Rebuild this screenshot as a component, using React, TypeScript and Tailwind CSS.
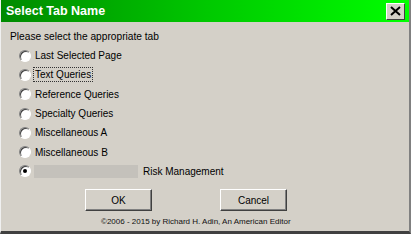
import { useState } from 'react';

const options = [
    'Last Selected Page',
    'Text Queries',
    'Reference Queries',
    'Specialty Queries',
    'Miscellaneous A',
    'Miscellaneous B',
];

function Radio({ checked }: { checked: boolean }) {
    return (
        <span className="relative w-[12px] h-[12px] rounded-full bg-white shrink-0 border border-t-[#808080] border-l-[#808080] border-b-[#ffffff] border-r-[#ffffff] shadow-[inset_1px_1px_0_#404040]">
            {checked && <span className="absolute left-[3px] top-[3px] w-[4px] h-[4px] rounded-full bg-black" />}
        </span>
    );
}

export default function App() {
    const [selected] = useState(6);

    return (
        <div
            className="w-[411px] h-[234px] bg-[#d4d0c8] flex flex-col border-l border-l-[#f0f0f0] border-b-[3px] border-b-[#404040] border-r-2 border-r-[#808080] overflow-hidden"
            style={{ fontFamily: '"Liberation Sans", Arial, sans-serif' }}
        >
            {/* Title bar */}
            <div className="h-[22px] shrink-0 flex items-center justify-between pl-[5px] pr-[4px] bg-gradient-to-r from-[#008a00] via-[#00c800] to-[#00ff00]">
                <span className="text-white font-bold text-[12.5px]">Select Tab Name</span>
                <button className="w-[19px] h-[17px] bg-[#d4d0c8] flex items-center justify-center border border-t-white border-l-white border-b-[#404040] border-r-[#404040]">
                    <svg width="11" height="10" viewBox="0 0 11 10">
                        <path d="M1 1 L10 9 M10 1 L1 9" stroke="#000" strokeWidth="2" />
                    </svg>
                </button>
            </div>

            {/* Body */}
            <div className="flex-1 flex flex-col pl-[9px] pt-[8px] text-black text-[10px]">
                <div className="h-[14px] leading-[14px] text-[10.2px]">Please select the appropriate tab</div>
                <div className="flex flex-col pl-[9px] mt-[2px]">
                    {options.map((o, i) => (
                        <div key={o} className="h-[19.3px] flex items-center gap-[3px]">
                            <Radio checked={selected === i} />
                            <span
                                className={
                                    'leading-[13px] px-[1px] ' +
                                    (i === 1 ? 'outline outline-1 outline-dotted outline-[#333]' : '')
                                }
                            >
                                {o}
                            </span>
                        </div>
                    ))}
                    <div className="h-[19.3px] flex items-center gap-[3px]">
                        <Radio checked={selected === 6} />
                        <span className="w-[104px] h-[13px] bg-[#c4c1bb]" />
                        <span className="ml-[2px]">Risk Management</span>
                    </div>
                </div>

                <div className="flex gap-[68px] ml-[75px] mt-[8px]">
                    <button className="w-[67px] h-[22px] text-[10px] border border-t-white border-l-white border-b-[#404040] border-r-[#404040] shadow-[inset_-1px_-1px_0_#808080]">
                        OK
                    </button>
                    <button className="w-[67px] h-[22px] text-[10px] border border-t-white border-l-white border-b-[#404040] border-r-[#404040] shadow-[inset_-1px_-1px_0_#808080]">
                        Cancel
                    </button>
                </div>
                <div className="text-[8px] mt-[5px] ml-[91px] text-[#111]">
                    ©2006 - 2015 by Richard H. Adin, An American Editor
                </div>
            </div>
        </div>
    );
}
